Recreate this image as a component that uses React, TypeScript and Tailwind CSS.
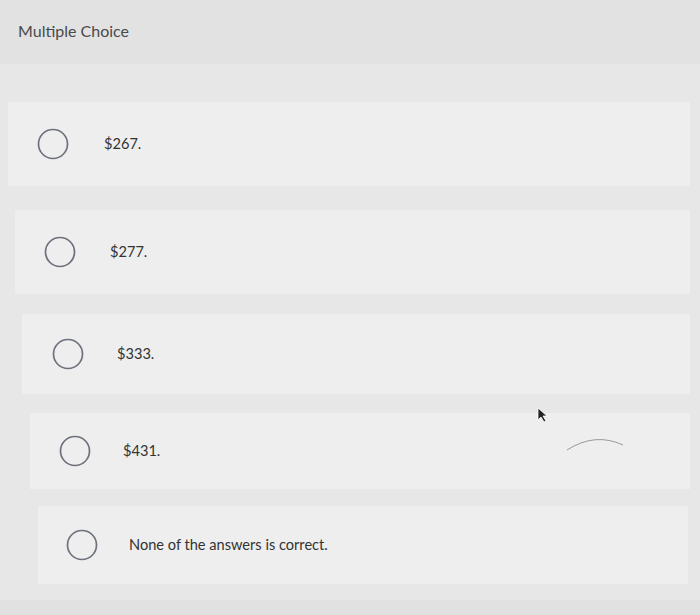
import React from "react";

const options = [
  { label: "$267.", top: "mt-[38px]", h: "h-[84px]", ml: "ml-[8px]", mr: "mr-[10px]", pl: "pl-[28.5px]", gap: "gap-[35.5px]" },
  { label: "$277.", top: "mt-[24px]", h: "h-[84px]", ml: "ml-[15px]", mr: "mr-[10px]", pl: "pl-[29px]", gap: "gap-[34px]" },
  { label: "$333.", top: "mt-[20px]", h: "h-[80px]", ml: "ml-[22px]", mr: "mr-[10px]", pl: "pl-[30px]", gap: "gap-[33px]" },
  { label: "$431.", top: "mt-[19px]", h: "h-[76px]", ml: "ml-[30px]", mr: "mr-[10px]", pl: "pl-[29px]", gap: "gap-[32px]" },
  { label: "None of the answers is correct.", top: "mt-[17px]", h: "h-[78px]", ml: "ml-[38px]", mr: "mr-[12px]", pl: "pl-[28px]", gap: "gap-[31px]" },
];

function Radio() {
  return (
    <svg width="32" height="32" viewBox="0 0 32 32" className="shrink-0">
      <circle cx="16" cy="16" r="14.5" fill="none" stroke="#6d717c" strokeWidth="1.7" />
    </svg>
  );
}

export default function App() {
  return (
    <div
      className="relative w-[700px] h-[615px] overflow-hidden bg-[#e1e1e1] text-[#333]"
      style={{ fontFamily: "Lato, 'Open Sans', sans-serif" }}
    >
      <div className="h-[64px] px-[18px] pt-[19px] text-[16px] text-[#4a4a4a] bg-[#e2e2e2]">
        Multiple Choice
      </div>
      <div className="flex flex-col bg-[#e7e7e7] pb-[16px]">
        {options.map((o, i) => (
          <div
            key={i}
            className={`${o.top} ${o.h} ${o.ml} ${o.mr} ${o.pl} ${o.gap} flex items-center bg-[#eeeeee]`}
          >
            <Radio />
            <span className="text-[14.6px] text-[#333]">{o.label}</span>
          </div>
        ))}
      </div>
      <svg className="absolute left-[536px] top-[406px]" width="16" height="18" viewBox="0 0 16 18">
        <path d="M2 2 L2 14 L5 11 L8 16 L10 15 L7 10 L11 10 Z" fill="#222" stroke="#fff" strokeWidth="0.8" />
      </svg>
      <svg className="absolute left-[565px] top-[436px]" width="62" height="16" viewBox="0 0 62 16">
        <path d="M2 14 Q 30 -4 58 9" fill="none" stroke="#9a9a9a" strokeWidth="1" />
      </svg>
    </div>
  );
}
